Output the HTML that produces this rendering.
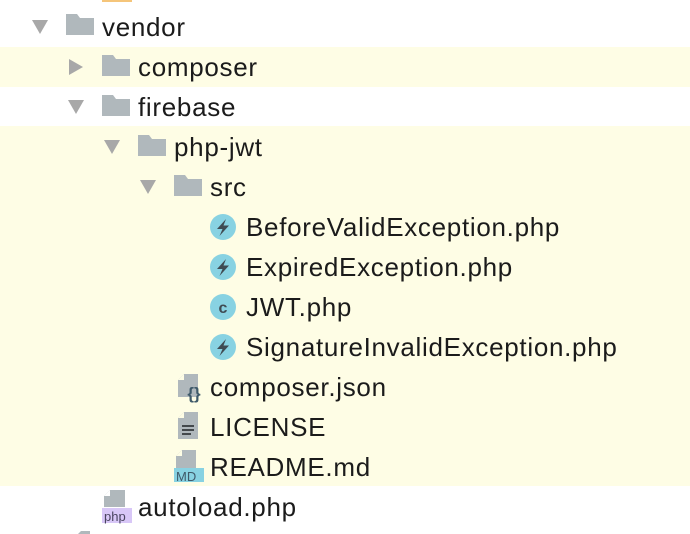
<!DOCTYPE html>
<html><head><meta charset="utf-8"><style>
html,body{margin:0;padding:0;width:690px;height:534px;background:#fff;overflow:hidden;position:relative;font-family:"Liberation Sans",sans-serif}
.hl{position:absolute;left:0;width:690px;background:#fefde5}
.row{position:absolute;height:40px;left:0;width:690px}
.t{position:absolute;top:5px;font-size:26px;letter-spacing:0.7px;color:#1b1b1b;line-height:30px;white-space:nowrap}
</style></head><body>
<div style="position:absolute;left:102px;top:0;width:30px;height:2px;background:#f5c57a"></div>
<div class="hl" style="top:47px;height:40px"></div>
<div class="hl" style="top:126px;height:360px"></div>

<svg width="690" height="534" style="position:absolute;left:0;top:0">
<defs>
<g id="fold"><path d="M0 0H11L14 4H28V21H0Z" fill="#b0b8bc"/></g>
<g id="down"><path d="M0 0H16L8 14Z" fill="#a8a8a8"/></g>
<g id="right"><path d="M0 0L14 8L0 16Z" fill="#a8a8a8"/></g>
<g id="bolt"><circle cx="13" cy="13" r="13" fill="#88d2e2"/><path d="M16 5L7 15H12.5L9.5 22L19 11.5H13.5Z" fill="#3f4b53"/></g>
</defs>
<use href="#down" x="32" y="20"/><use href="#fold" x="66" y="14"/>
<use href="#right" x="69" y="59"/><use href="#fold" x="102" y="55"/>
<use href="#down" x="68" y="100"/><use href="#fold" x="102" y="95"/>
<use href="#down" x="104" y="140"/><use href="#fold" x="138" y="135"/>
<use href="#down" x="140" y="180"/><use href="#fold" x="174" y="175"/>
<use href="#bolt" x="210" y="214"/>
<use href="#bolt" x="210" y="254"/>
<circle cx="223" cy="307" r="13" fill="#88d2e2"/>
<text x="223" y="313" font-family="Liberation Sans" font-size="16" font-weight="bold" fill="#3f4b53" text-anchor="middle">c</text>
<use href="#bolt" x="210" y="334"/>
<path d="M184 374H198V397H178V380Z" fill="#b0b8bc"/><path d="M178 380L184 374V380Z" fill="#fefde5"/>
<text x="194" y="399" font-family="Liberation Sans" font-size="17" font-weight="bold" fill="#3f5a6a" text-anchor="middle">{}</text>
<path d="M184 412H198V439H178V418Z" fill="#b0b8bc"/><path d="M178 418L184 412V418Z" fill="#fefde5"/>
<rect x="182" y="425" width="12" height="2" fill="#44494c"/><rect x="182" y="429" width="12" height="2" fill="#44494c"/><rect x="182" y="433" width="9" height="2" fill="#44494c"/>
<path d="M182 450H196V468H176V456Z" fill="#b0b8bc"/><path d="M176 456L182 450V456Z" fill="#fefde5"/>
<rect x="174" y="468" width="30" height="14" fill="#88d2e2"/>
<text x="176" y="481" font-family="Liberation Sans" font-size="13" fill="#3f5a6a">MD</text>
<path d="M110 490H125V507H104V496Z" fill="#b0b8bc"/><path d="M104 496L110 490V496Z" fill="#fff"/>
<rect x="102" y="508" width="30" height="15" fill="#d8c7f7"/>
<text x="104" y="521" font-family="Liberation Sans" font-size="13" fill="#4a4460">php</text>
<path d="M78 534H90V531H81Z" fill="#b0b8bc"/>
</svg>

<div class="row" style="top:7px"><span class="t" style="left:102px">vendor</span></div>
<div class="row" style="top:47px"><span class="t" style="left:138px">composer</span></div>
<div class="row" style="top:87px"><span class="t" style="left:138px">firebase</span></div>
<div class="row" style="top:127px"><span class="t" style="left:174px">php-jwt</span></div>
<div class="row" style="top:167px"><span class="t" style="left:210px">src</span></div>
<div class="row" style="top:207px"><span class="t" style="left:246px">BeforeValidException.php</span></div>
<div class="row" style="top:247px"><span class="t" style="left:246px">ExpiredException.php</span></div>
<div class="row" style="top:287px"><span class="t" style="left:246px">JWT.php</span></div>
<div class="row" style="top:327px"><span class="t" style="left:246px">SignatureInvalidException.php</span></div>
<div class="row" style="top:367px"><span class="t" style="left:210px">composer.json</span></div>
<div class="row" style="top:407px"><span class="t" style="left:210px">LICENSE</span></div>
<div class="row" style="top:447px"><span class="t" style="left:210px">README.md</span></div>
<div class="row" style="top:487px"><span class="t" style="left:138px">autoload.php</span></div>
</body></html>
